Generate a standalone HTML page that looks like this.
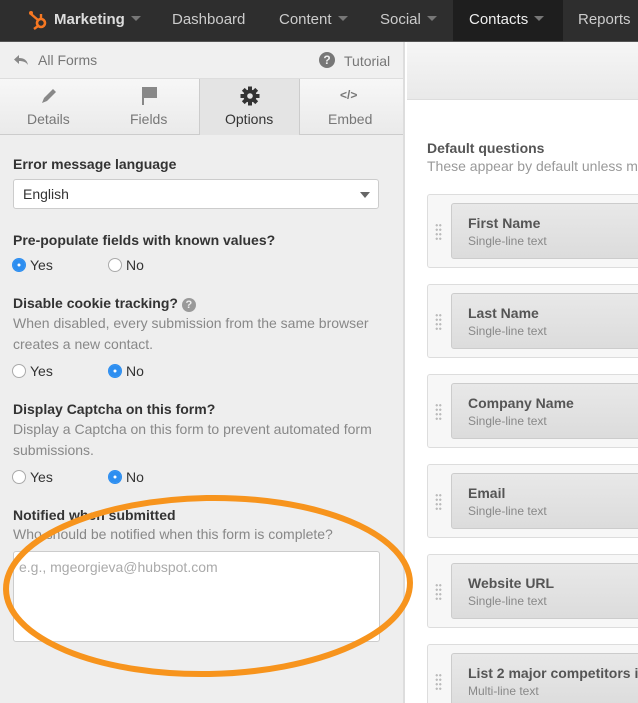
<!DOCTYPE html><html><head><style>
*{box-sizing:border-box;margin:0;padding:0}
html,body{width:638px;height:703px;overflow:hidden}
body{font-family:"Liberation Sans",sans-serif;background:#fff;position:relative}
.nav{position:absolute;left:0;top:0;width:638px;height:42px;background:#2e2e2e;border-bottom:1px solid #555}
.nav span{position:absolute;top:11px;font-size:15px;color:#ccc}
.car{display:inline-block;width:0;height:0;border-left:5px solid transparent;border-right:5px solid transparent;border-top:5px solid #777;margin-left:6px;vertical-align:3px}
.left{position:absolute;left:0;top:42px;width:405px;height:661px;background:#eee;border-right:2px solid #ddd}
.right{position:absolute;left:407px;top:42px;width:231px;height:661px;background:#fff}
.lbl{position:absolute;left:13px;font-size:14px;font-weight:bold;color:#333}
.sub{position:absolute;left:13px;font-size:14px;color:#888;line-height:21px}
.r{position:absolute;font-size:14px;color:#333}
.r i{display:inline-block;width:14px;height:14px;border-radius:50%;border:1px solid #aaa;background:#fff;vertical-align:-2px;margin-right:4px}
.r i.on{background:#2d8ef0;border-color:#2d8ef0;box-shadow:inset 0 0 0 4.5px #2d8ef0,inset 0 0 0 7px #fff}
.card{position:absolute;left:427px;width:220px;height:74px;border:1px solid #ddd;border-radius:3px;background:#f7f7f7}
.card .in{position:absolute;left:23px;top:8px;width:200px;height:56px;border:1px solid #ccc;border-radius:3px;background:linear-gradient(#e8e8e8,#dcdcdc)}
.card b{position:absolute;left:16px;top:11px;font-size:14px;color:#555}
.card s{position:absolute;left:16px;top:30px;font-size:12px;color:#888;text-decoration:none;white-space:nowrap}
.dots{position:absolute;left:7px;top:28px;width:7px;height:18px;background-image:radial-gradient(circle,#bbb 1px,transparent 1.3px);background-size:3.5px 4.5px}
</style></head><body>
<div class="nav">
<svg style="position:absolute;left:28px;top:9px" width="22" height="22" viewBox="0 0 22 22"><circle cx="13" cy="14" r="4" fill="none" stroke="#f57722" stroke-width="2.6"/><path d="M13 10V5M10 11L3 5M10 17L6 20" stroke="#f57722" stroke-width="2.4"/><circle cx="3" cy="4" r="2" fill="#f57722"/></svg>
<span style="left:54px;font-weight:bold;color:#ddd">Marketing<i class="car"></i></span>
<span style="left:172px">Dashboard</span>
<span style="left:279px">Content<i class="car"></i></span>
<span style="left:380px">Social<i class="car"></i></span>
<div style="position:absolute;left:453px;top:0;width:110px;height:41px;background:#1e1e1e"></div>
<span style="left:469px;color:#eee">Contacts<i class="car"></i></span>
<span style="left:578px">Reports</span>
</div>
<div class="left">
<div style="position:absolute;left:0;top:0;width:403px;height:37px;border-bottom:1px solid #ddd;background:#f0f0f0">
<svg style="position:absolute;left:13px;top:12px" width="16" height="12"><path d="M6 1L1 5.5 6 10V7C10 7 13 8 15 11 14 6 11 4 6 4z" fill="#888"/></svg>
<span style="position:absolute;left:38px;top:10px;font-size:14px;color:#777">All Forms</span>
<span style="position:absolute;left:319px;top:10px;width:16px;height:16px;border-radius:50%;background:#777;color:#eee;font-size:12px;font-weight:bold;text-align:center;line-height:16px">?</span>
<span style="position:absolute;left:344px;top:11px;font-size:14px;color:#777">Tutorial</span>
</div>
<div style="position:absolute;left:0;top:37px;width:403px;height:56px;background:linear-gradient(#f7f7f7,#eaeaea);border-bottom:1px solid #ccc">
<div style="position:absolute;left:199px;top:0;width:101px;height:56px;background:#e4e4e4;border-left:1px solid #ccc;border-right:1px solid #ccc"></div>
<svg style="position:absolute;left:39px;top:7px" width="20" height="20"><path d="M3 17l2-5 9-9 3 3-9 9z" fill="#888"/></svg>
<svg style="position:absolute;left:141px;top:7px" width="18" height="20"><path d="M2 1v18M4 2h11v9H4z" stroke="#888" stroke-width="2" fill="#888"/></svg>
<svg style="position:absolute;left:240px;top:7px" width="20" height="20" viewBox="0 0 20 20"><g fill="#333"><circle cx="10" cy="10" r="6.5"/><rect x="8" y="0.5" width="4" height="19"/><rect x="0.5" y="8" width="19" height="4"/><rect x="8" y="0.5" width="4" height="19" transform="rotate(45 10 10)"/><rect x="8" y="0.5" width="4" height="19" transform="rotate(-45 10 10)"/></g><circle cx="10" cy="10" r="2.8" fill="#e4e4e4"/></svg>
<span style="position:absolute;left:340px;top:9px;font-size:12px;color:#777;font-weight:bold">&lt;/&gt;</span>
<span style="position:absolute;left:27px;top:32px;font-size:14px;color:#777">Details</span>
<span style="position:absolute;left:130px;top:32px;font-size:14px;color:#777">Fields</span>
<span style="position:absolute;left:225px;top:32px;font-size:14px;color:#333">Options</span>
<span style="position:absolute;left:328px;top:32px;font-size:14px;color:#777">Embed</span>
</div>
</div>
<div class="lbl" style="top:156px">Error message language</div>
<div style="position:absolute;left:13px;top:179px;width:366px;height:30px;border:1px solid #ccc;border-radius:3px;background:#fff;font-size:14px;color:#333;padding:6px 9px">English<span style="position:absolute;right:8px;top:12px;border-left:5px solid transparent;border-right:5px solid transparent;border-top:6px solid #666"></span></div>
<div class="lbl" style="top:232px">Pre-populate fields with known values?</div>
<div class="r" style="left:12px;top:257px"><i class="on"></i>Yes</div>
<div class="r" style="left:108px;top:257px"><i></i>No</div>
<div class="lbl" style="top:295px">Disable cookie tracking? <span style="display:inline-block;width:14px;height:14px;border-radius:50%;background:#999;color:#eee;font-size:11px;text-align:center;line-height:14px">?</span></div>
<div class="sub" style="top:313px">When disabled, every submission from the same browser<br>creates a new contact.</div>
<div class="r" style="left:12px;top:363px"><i></i>Yes</div>
<div class="r" style="left:108px;top:363px"><i class="on"></i>No</div>
<div class="lbl" style="top:401px">Display Captcha on this form?</div>
<div class="sub" style="top:419px">Display a Captcha on this form to prevent automated form<br>submissions.</div>
<div class="r" style="left:12px;top:469px"><i></i>Yes</div>
<div class="r" style="left:108px;top:469px"><i class="on"></i>No</div>
<div class="lbl" style="top:507px">Notified when submitted</div>
<div class="sub" style="top:524px">Who should be notified when this form is complete?</div>
<div style="position:absolute;left:13px;top:551px;width:367px;height:91px;border:1px solid #ccc;border-radius:3px;background:#fff;font-size:14px;color:#aaa;padding:7px 5px">e.g., mgeorgieva@hubspot.com</div>
<div class="right">
<div style="position:absolute;left:0;top:0;width:231px;height:58px;background:linear-gradient(#f6f6f6,#e9e9e9);border-bottom:1px solid #ddd"></div>
<div style="position:absolute;left:20px;top:98px;font-size:14px;font-weight:bold;color:#555">Default questions</div>
<div style="position:absolute;left:20px;top:116px;font-size:14px;color:#999;white-space:nowrap">These appear by default unless ma</div>
</div>
<div class="card" style="top:194px"><div class="dots"></div><div class="in"><b>First Name</b><s>Single-line text</s></div></div>
<div class="card" style="top:284px"><div class="dots"></div><div class="in"><b>Last Name</b><s>Single-line text</s></div></div>
<div class="card" style="top:374px"><div class="dots"></div><div class="in"><b>Company Name</b><s>Single-line text</s></div></div>
<div class="card" style="top:464px"><div class="dots"></div><div class="in"><b>Email</b><s>Single-line text</s></div></div>
<div class="card" style="top:554px"><div class="dots"></div><div class="in"><b>Website URL</b><s>Single-line text</s></div></div>
<div class="card" style="top:644px"><div class="dots"></div><div class="in"><b style="white-space:nowrap">List 2 major competitors i</b><s>Multi-line text</s></div></div>
<svg style="position:absolute;left:0;top:0" width="638" height="703"><ellipse cx="208" cy="586" rx="202" ry="88" fill="none" stroke="#f7941d" stroke-width="6" transform="rotate(-1 208 586)"/></svg>
</body></html>
